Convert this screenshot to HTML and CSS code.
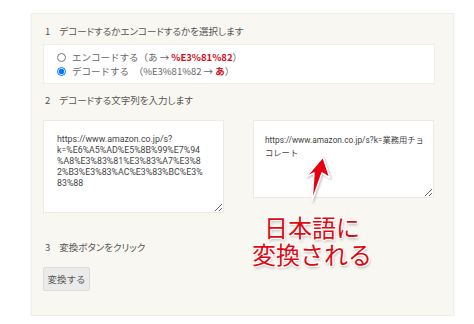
FILE: index.html
```html
<!DOCTYPE html>
<html lang="ja">
<head>
    <meta charset="UTF-8">
    <meta name="viewport" content="width=device-width, initial-scale=1.0">
    <title>URLデコード</title>
    <link rel="stylesheet" href="styles.css">
</head>
<body>
    <div class="panel">
        <p class="step"><span class="num">1</span>デコードするかエンコードするかを選択します</p>
        <div class="mode-box">
            <label class="mode"><input type="radio" name="mode"><span>エンコードする（あ → <b class="red">%E3%81%82</b>）</span></label>
            <label class="mode"><input type="radio" name="mode" checked><span>デコードする　（%E3%81%82 → <b class="red">あ</b>）</span></label>
        </div>
        <p class="step step-2"><span class="num">2</span>デコードする文字列を入力します</p>
        <div class="fields">
            <textarea class="field tall" wrap="off">https://www.amazon.co.jp/s?
k=%E6%A5%AD%E5%8B%99%E7%94
%A8%E3%83%81%E3%83%A7%E3%8
2%B3%E3%83%AC%E3%83%BC%E3%
83%88</textarea>
            <textarea class="field short" wrap="off">https://www.amazon.co.jp/s?k=業務用チョ
コレート</textarea>
        </div>
        <p class="step step-3"><span class="num">3</span>変換ボタンをクリック</p>
        <button class="convert">変換する</button>

        <svg class="arrow" width="40" height="56" viewBox="0 0 40 56">
            <polygon points="23,7 30,28 22,23 12,51 14,23 6,27" fill="#e60012" stroke="#fff" stroke-width="1.5" stroke-linejoin="round"/>
        </svg>
        <div class="note">日本語に<br>変換される</div>
    </div>
</body>
</html>
```

FILE: styles.css
```css
body {
    margin: 0;
    background-color: #fff;
    font-family: "Noto Sans CJK JP", sans-serif;
    color: #555;
}
.panel {
    position: relative;
    width: 423px;
    margin: 13px 0 0 31px;
    padding: 11px 18px 24px 11px;
    background-color: #f8f7f2;
    border: 1px solid #efeee8;
    box-shadow: 0 1px 2px rgba(0, 0, 0, 0.08);
    box-sizing: border-box;
}
.step {
    margin: 0;
    padding-left: 2px;
    font-size: 9.5px;
    line-height: 13px;
    font-feature-settings: "palt";
}
.num {
    margin-right: 9px;
}
.mode-box {
    margin-top: 6px;
    padding: 5px 13px;
    background-color: #fff;
    border: 1px solid #eeede8;
}
.mode {
    display: flex;
    align-items: center;
    height: 14px;
    font-size: 9.5px;
    color: #666;
}
.mode input {
    width: 9px;
    height: 9px;
    margin: 0 6px 0 0;
}
.red {
    color: #d0101e;
}
.step-2 {
    margin-top: 10px;
}
.fields {
    display: grid;
    grid-template-columns: 181px 181px;
    column-gap: 29px;
    align-items: start;
    margin-top: 13px;
}
.field {
    display: block;
    padding: 13px 13px;
    font-family: Roboto, "Noto Sans CJK JP", sans-serif;
    font-size: 8.8px;
    line-height: 11px;
    color: #444;
    background-color: #fff;
    border: 1px solid #eceae4;
    box-sizing: border-box;
    outline: none;
    overflow: hidden;
    white-space: pre;
}
.tall {
    height: 93px;
}
.short {
    height: 78px;
    padding: 13px 2px 13px 11px;
    font-size: 8.3px;
    line-height: 13px;
}
.step-3 {
    margin-top: 28px;
}
.convert {
    display: block;
    width: 47px;
    height: 24px;
    margin-top: 13px;
    padding: 0;
    font-family: "Noto Sans CJK JP", sans-serif;
    font-size: 9.5px;
    color: #555;
    background-color: #ebebeb;
    border: 1px solid #dcdcdc;
    border-radius: 2px;
}
.arrow {
    position: absolute;
    left: 268px;
    top: 136px;
    filter: drop-shadow(1px 1px 1px rgba(0, 0, 0, 0.25));
}
.note {
    position: absolute;
    left: 218px;
    top: 199px;
    width: 124px;
    text-align: center;
    font-size: 24px;
    line-height: 27px;
    color: #dc0a14;
    text-shadow: -1px -1px 0 #fff, 1px -1px 0 #fff, -1px 1px 0 #fff, 1px 1px 0 #fff, 1px 2px 3px rgba(0, 0, 0, 0.3);
}
```
